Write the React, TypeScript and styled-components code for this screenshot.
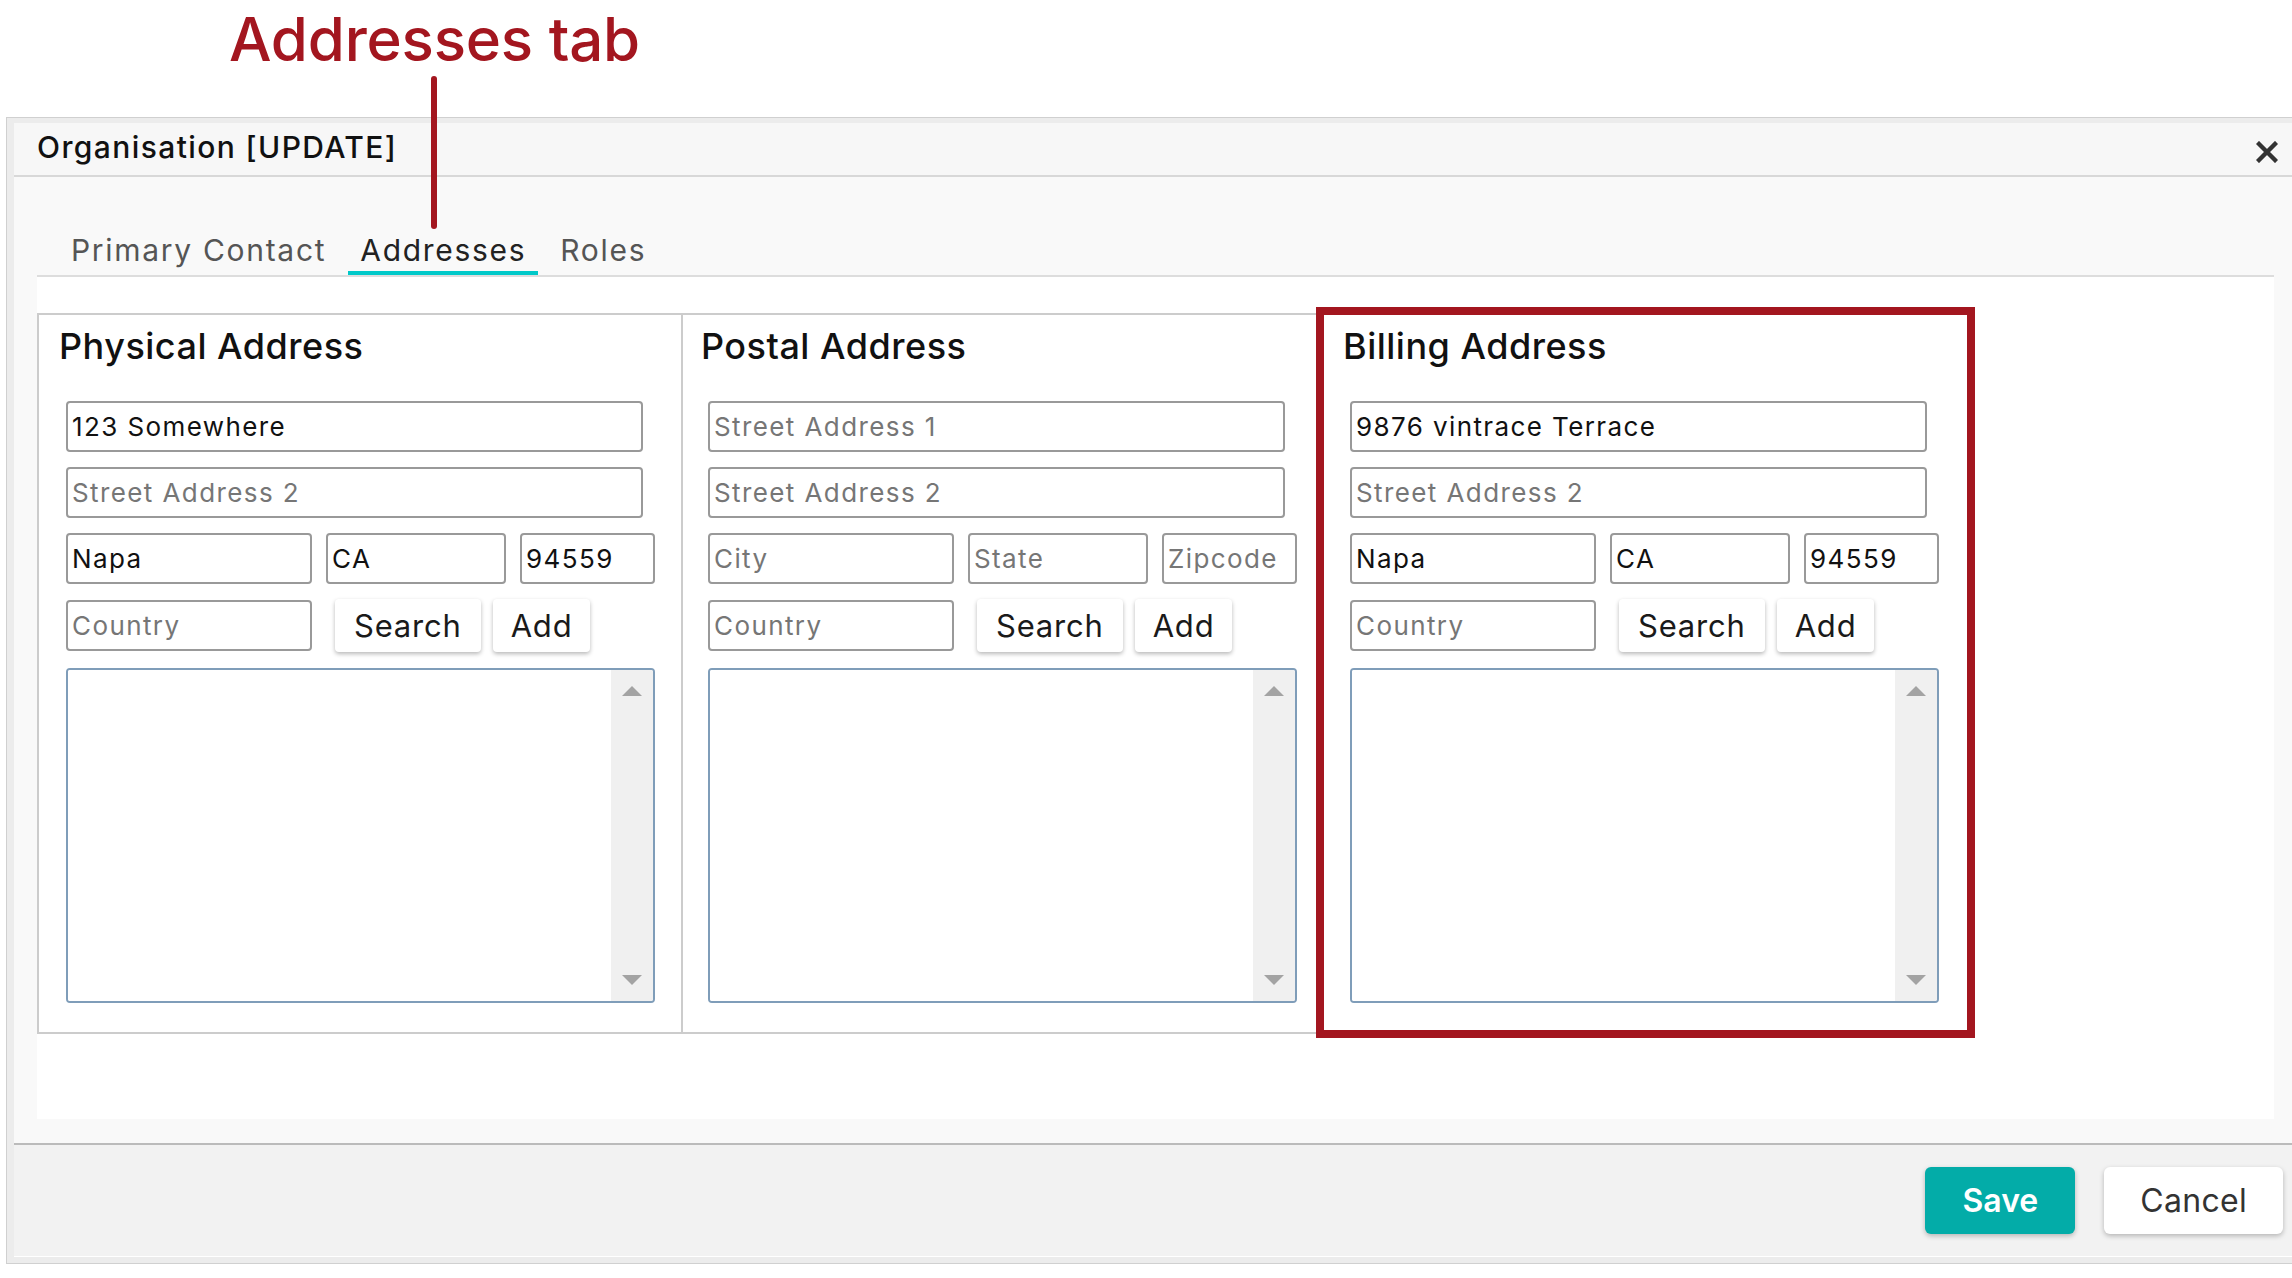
import React from 'react'
import styled, { createGlobalStyle } from 'styled-components'

const GlobalStyle = createGlobalStyle`
  * {
    box-sizing: border-box;
  }
  body {
    margin: 0;
    background: #ffffff;
    font-family: Inter, 'Liberation Sans', sans-serif;
    color: #111;
  }
`

type AddressData = {
  id: string
  title: string
  street1: string
  street2: string
  city: string
  state: string
  zip: string
  country: string
  highlighted: boolean
}

const addresses: AddressData[] = [
  {
    id: 'physical',
    title: 'Physical Address',
    street1: '123 Somewhere',
    street2: '',
    city: 'Napa',
    state: 'CA',
    zip: '94559',
    country: '',
    highlighted: false,
  },
  {
    id: 'postal',
    title: 'Postal Address',
    street1: '',
    street2: '',
    city: '',
    state: '',
    zip: '',
    country: '',
    highlighted: false,
  },
  {
    id: 'billing',
    title: 'Billing Address',
    street1: '9876 vintrace Terrace',
    street2: '',
    city: 'Napa',
    state: 'CA',
    zip: '94559',
    country: '',
    highlighted: true,
  },
]

const tabs = ['Primary Contact', 'Addresses', 'Roles']

const App = () => {
  return (
    <>
      <GlobalStyle />
      <AnnotationBar>
        <AnnotationTitle>{'Addresses tab'}</AnnotationTitle>
        <AnnotationPointer />
      </AnnotationBar>

      <Frame>
        <Header>
          <HeaderTitle>{'Organisation [UPDATE]'}</HeaderTitle>
          <CloseButton type={'button'} aria-label={'Close'}>
            <svg width={22} height={22} viewBox={'0 0 22 22'}>
              <path d={'M3 3 L19 19 M19 3 L3 19'} stroke={'#333'} strokeWidth={4.4} strokeLinecap={'square'} />
            </svg>
          </CloseButton>
        </Header>

        <Body>
          <TabBar>
            {tabs.map((tab) => (
              <Tab key={tab} $active={tab === 'Addresses'}>
                {tab}
              </Tab>
            ))}
          </TabBar>

          <Content>
            <AddressPanel>
              {addresses.map((address, idx) => (
                <AddressColumn key={address.id} $index={idx} $highlighted={address.highlighted}>
                  <ColumnTitle>{address.title}</ColumnTitle>
                  <Fields>
                    <StreetInput readOnly value={address.street1} placeholder={'Street Address 1'} />
                    <StreetInput readOnly value={address.street2} placeholder={'Street Address 2'} />
                    <CityRow>
                      <TextInput readOnly value={address.city} placeholder={'City'} />
                      <TextInput readOnly value={address.state} placeholder={'State'} />
                      <TextInput readOnly value={address.zip} placeholder={'Zipcode'} />
                    </CityRow>
                    <CountryRow>
                      <CountryInput readOnly value={address.country} placeholder={'Country'} />
                      <SearchButton type={'button'}>{'Search'}</SearchButton>
                      <ActionButton type={'button'}>{'Add'}</ActionButton>
                    </CountryRow>
                  </Fields>
                  <ResultList>
                    <ResultItems />
                    <ScrollTrack>
                      <ScrollArrow $dir={'up'} />
                      <ScrollArrow $dir={'down'} />
                    </ScrollTrack>
                  </ResultList>
                </AddressColumn>
              ))}
            </AddressPanel>
          </Content>
        </Body>

        <Footer>
          <SaveButton type={'button'}>{'Save'}</SaveButton>
          <CancelButton type={'button'}>{'Cancel'}</CancelButton>
        </Footer>
      </Frame>
    </>
  )
}

const annotationRed = '#a3161f'

const AnnotationBar = styled.div`
  position: relative;
  height: 117px;
`

const AnnotationTitle = styled.h1`
  margin: 0;
  padding: 9px 0 0 229px;
  font-size: 60px;
  line-height: 60px;
  font-weight: 500;
  letter-spacing: -0.2px;
  color: ${annotationRed};
`

const AnnotationPointer = styled.div`
  position: absolute;
  left: 431px;
  top: 76px;
  width: 6px;
  height: 153px;
  border-radius: 3px;
  background: ${annotationRed};
  z-index: 2;
`

const Frame = styled.div`
  margin-left: 6px;
  width: 2286px;
  height: 1147px;
  border: 1px solid #d0d0d0;
  border-right: none;
  background: #ececec;
  padding: 5px 0 6px 7px;
  display: flex;
  flex-direction: column;
`

const Header = styled.div`
  height: 54px;
  display: flex;
  align-items: center;
  justify-content: space-between;
  padding: 0 14px 4px 23px;
  background: #f7f7f7;
  border-bottom: 2px solid #d8d8d8;
`

const HeaderTitle = styled.h2`
  margin: 0;
  font-size: 30px;
  font-weight: 500;
  letter-spacing: 1.4px;
  color: #111;
`

const CloseButton = styled.button`
  display: flex;
  padding: 0;
  margin-top: 10px;
  border: none;
  background: none;
`

const Body = styled.div`
  height: 966px;
  display: flex;
  flex-direction: column;
  padding: 0 18px 24px 23px;
  background: #f9f9f9;
`

const TabBar = styled.div`
  height: 100px;
  display: flex;
  align-items: flex-end;
  gap: 10px;
  padding-left: 22px;
  border-bottom: 2px solid #dddddd;
`

const Tab = styled.div<{ $active: boolean }>`
  padding: 0 12px 3px;
  font-size: 30px;
  line-height: 36px;
  letter-spacing: 1.7px;
  color: ${({ $active }) => ($active ? '#222' : '#555')};
  border-bottom: 4px solid ${({ $active }) => ($active ? '#00c9c9' : 'transparent')};
`

const Content = styled.div`
  flex: 1;
  padding-top: 36px;
  background: #ffffff;
`

const AddressPanel = styled.div`
  display: flex;
  width: fit-content;
  border: 2px solid #cccccc;
  border-right: none;
`

const columnPadding = ['9px 26px 29px 27px', '9px 19px 29px 25px', '9px 28px 27px 26px']

const AddressColumn = styled.section<{ $index: number; $highlighted: boolean }>`
  display: flex;
  flex-direction: column;
  padding: ${({ $index }) => columnPadding[$index]};
  background: #ffffff;
  border-right: ${({ $index }) => ($index === 0 ? '2px solid #cccccc' : 'none')};
  ${({ $highlighted }) =>
    $highlighted &&
    `
    margin: -8px 0 -6px;
    border: 8px solid ${annotationRed};
  `}
`

const ColumnTitle = styled.h3`
  margin: 0 0 33px -7px;
  font-size: 36px;
  line-height: 44px;
  font-weight: 500;
  letter-spacing: 0.5px;
  color: #111;
`

const Fields = styled.div`
  display: flex;
  flex-direction: column;
  gap: 15px;
`

const TextInput = styled.input`
  width: 100%;
  height: 51px;
  padding: 0 4px;
  border: 2px solid #999999;
  border-radius: 4px;
  background: #ffffff;
  font-family: Inter, 'Liberation Sans', sans-serif;
  font-size: 26px;
  letter-spacing: 1.4px;
  color: #111;
  outline: none;

  &::placeholder {
    color: #767676;
  }
`

const StreetInput = styled(TextInput)`
  width: 577px;
`

const CityRow = styled.div`
  display: grid;
  grid-template-columns: 246px 180px 135px;
  gap: 14px;
`

const CountryRow = styled.div`
  display: flex;
  align-items: center;
  height: 53px;
`

const CountryInput = styled(TextInput)`
  width: 246px;
  margin-right: 23px;
`

const ActionButton = styled.button`
  height: 53px;
  padding: 0 18px;
  border: none;
  border-radius: 4px;
  background: #ffffff;
  box-shadow: 0 2px 4px rgba(0, 0, 0, 0.28);
  font-family: Inter, 'Liberation Sans', sans-serif;
  font-size: 31px;
  letter-spacing: 0.8px;
  color: #1a1a1a;
`

const SearchButton = styled(ActionButton)`
  padding: 0 19px;
  margin-right: 12px;
`

const ResultList = styled.div`
  display: flex;
  width: 589px;
  height: 335px;
  margin-top: 16px;
  border: 2px solid #7f9db9;
  border-radius: 4px;
  overflow: hidden;
`

const ResultItems = styled.div`
  flex: 1;
  background: #ffffff;
`

const ScrollTrack = styled.div`
  width: 42px;
  display: flex;
  flex-direction: column;
  justify-content: space-between;
  align-items: center;
  padding: 16px 0;
  background: #f0f0f0;
`

const ScrollArrow = styled.div<{ $dir: 'up' | 'down' }>`
  width: 0;
  height: 0;
  border-left: 10px solid transparent;
  border-right: 10px solid transparent;
  ${({ $dir }) => ($dir === 'up' ? 'border-bottom: 10px solid #a3a3a3;' : 'border-top: 10px solid #a3a3a3;')}
`

const Footer = styled.div`
  flex: 1;
  display: flex;
  align-items: center;
  justify-content: flex-end;
  gap: 29px;
  padding-right: 9px;
  background: #f2f2f2;
  border-top: 2px solid #bbbbbb;
  border-bottom: 1px solid #ffffff;
`

const SaveButton = styled.button`
  height: 67px;
  padding: 0 37px;
  border: none;
  border-radius: 6px;
  background: #03aca8;
  box-shadow: 0 2px 5px rgba(0, 0, 0, 0.25);
  font-family: Inter, 'Liberation Sans', sans-serif;
  font-size: 32px;
  font-weight: 600;
  color: #ffffff;
`

const CancelButton = styled(SaveButton)`
  padding: 0 36px;
  background: #ffffff;
  font-weight: 400;
  letter-spacing: 0.3px;
  color: #333;
`

export default App
